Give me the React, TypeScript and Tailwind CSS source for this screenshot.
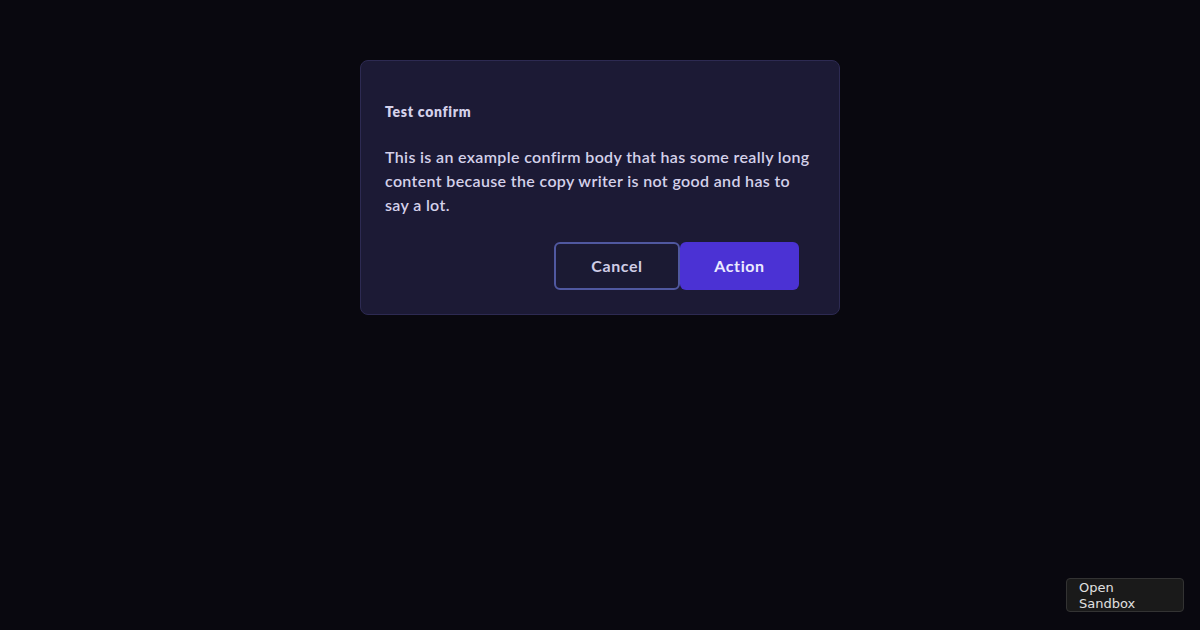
import React from "react";

export default function App() {
  return (
    <div className="w-[1200px] h-[630px] bg-[#09080f] relative overflow-hidden" style={{ fontFamily: "Lato, 'Noto Sans', sans-serif" }}>
      <div className="flex justify-center pt-[60px]">
        <div className="w-[480px] bg-[#1c1a35] border border-[#2d2a52] rounded-[8px] px-6 pt-[41px] pb-6 text-[#d4d1ea]">
          <h2 className="text-[14px] leading-[20px] font-extrabold tracking-[0.7px]">Test confirm</h2>
          <p className="mt-[23px] text-[16px] leading-[24px] font-semibold tracking-[0.35px]">
            This is an example confirm body that has some really long content because the copy writer is not good and has to say a lot.
          </p>
          <div className="mt-[25px] flex justify-end pr-4">
            <button className="w-[126px] h-[48px] rounded-[6px] border-2 border-[#5058a0] bg-[#1b1a33] text-[16px] font-bold tracking-[0.6px] text-[#cfcde6]">
              Cancel
            </button>
            <button className="w-[119px] h-[48px] rounded-[6px] bg-[#4b32d4] text-[16px] font-bold tracking-[0.6px] text-[#ecebff]">
              Action
            </button>
          </div>
        </div>
      </div>
      <button
        className="absolute left-[1066px] top-[578px] w-[118px] h-[34px] rounded-[4px] bg-[#1a1a1a] border border-[#333] text-left pl-[12px] pt-[1px] text-[13px] leading-[16px] text-[#e0e0e0]"
        style={{ fontFamily: "'DejaVu Sans', sans-serif" }}
      >
        Open
        <br />
        Sandbox
      </button>
    </div>
  );
}
